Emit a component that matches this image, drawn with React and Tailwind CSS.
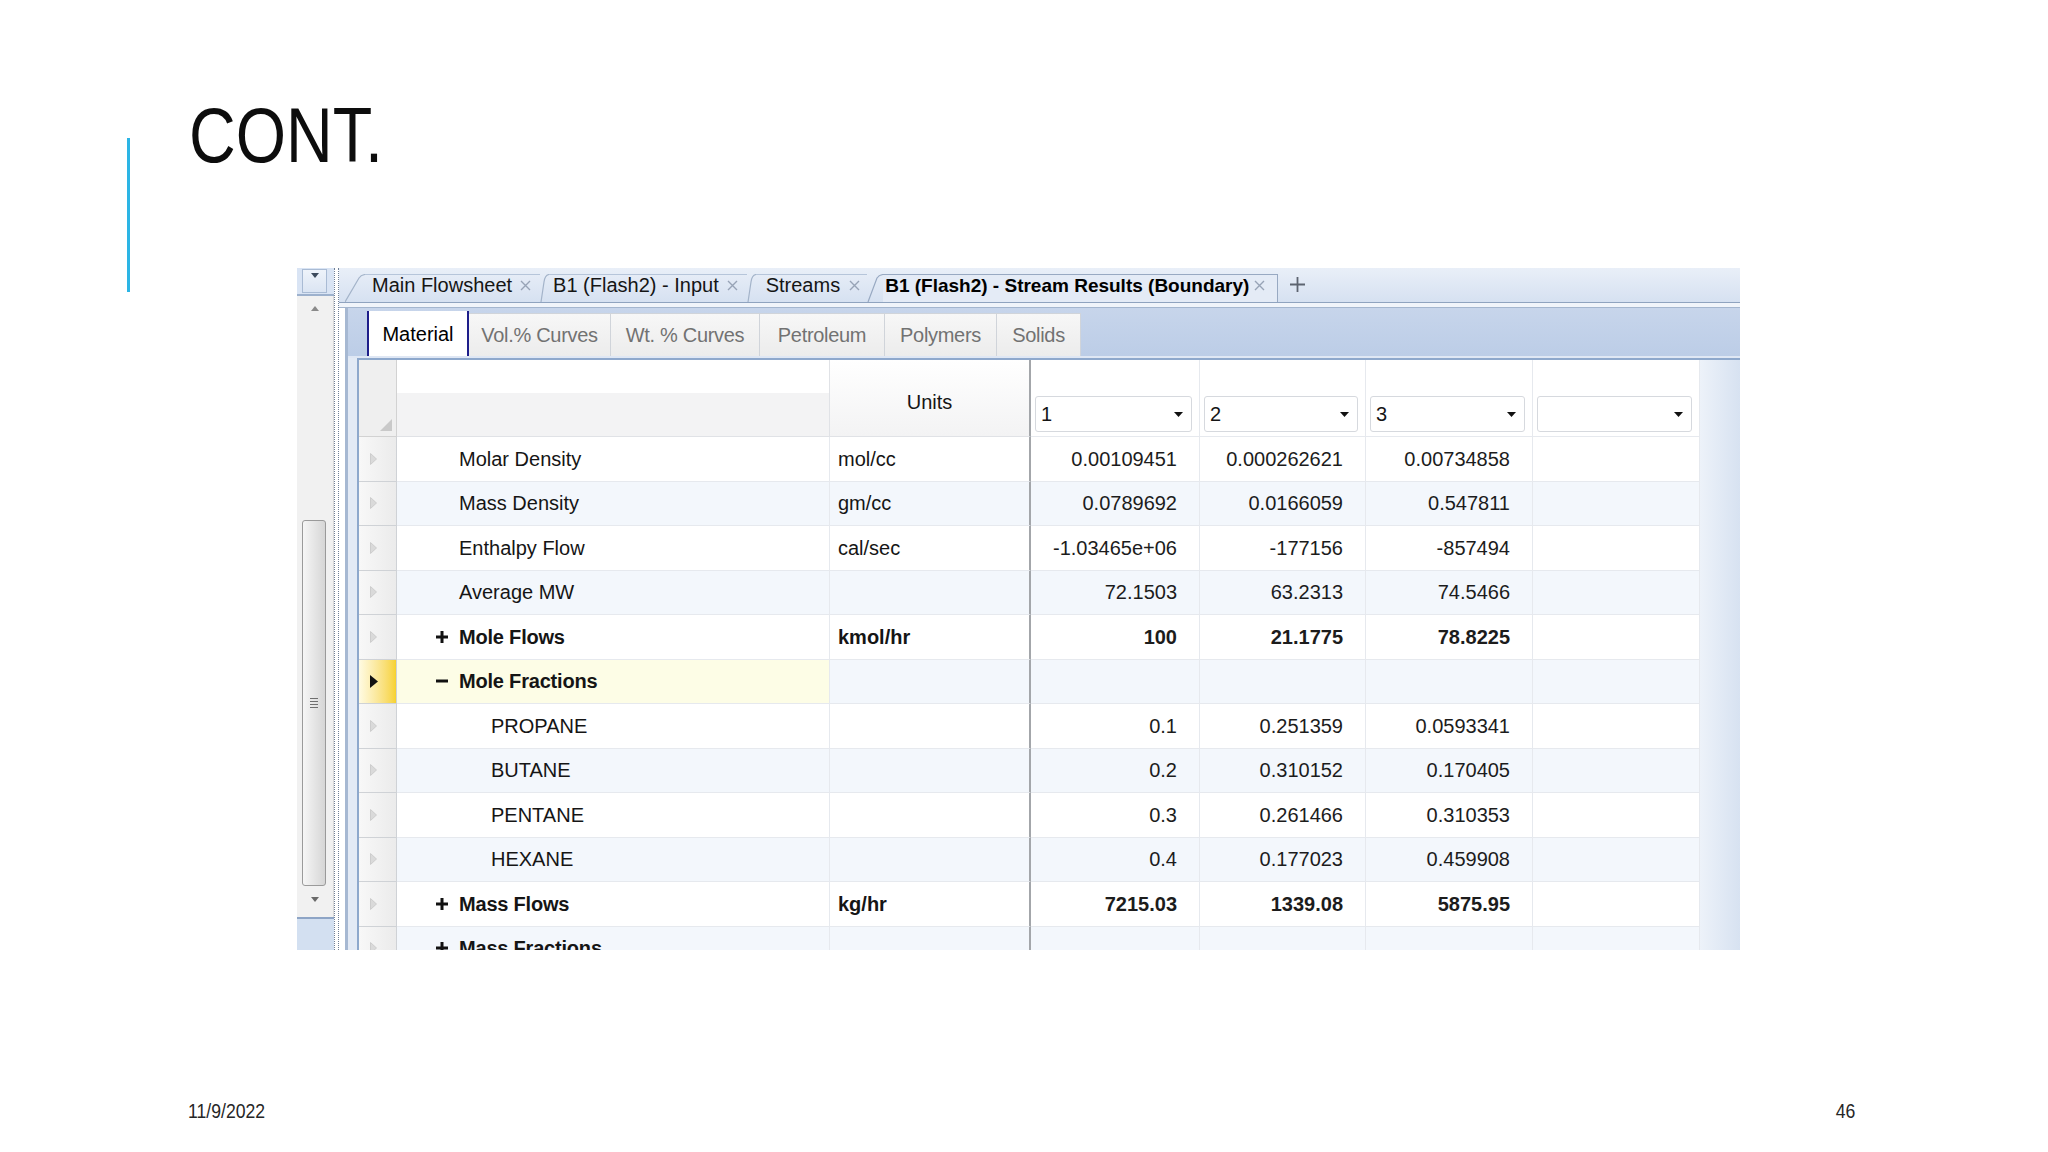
import React from "react";

const ROWS = [
    { name: "Molar Density", units: "mol/cc", v: ["0.00109451", "0.000262621", "0.00734858"] },
    { name: "Mass Density", units: "gm/cc", v: ["0.0789692", "0.0166059", "0.547811"] },
    { name: "Enthalpy Flow", units: "cal/sec", v: ["-1.03465e+06", "-177156", "-857494"] },
    { name: "Average MW", units: "", v: ["72.1503", "63.2313", "74.5466"] },
    { name: "Mole Flows", units: "kmol/hr", v: ["100", "21.1775", "78.8225"], bold: true, sign: "plus" },
    { name: "Mole Fractions", units: "", v: ["", "", ""], bold: true, sign: "minus", active: true },
    { name: "PROPANE", units: "", v: ["0.1", "0.251359", "0.0593341"], sub: true },
    { name: "BUTANE", units: "", v: ["0.2", "0.310152", "0.170405"], sub: true },
    { name: "PENTANE", units: "", v: ["0.3", "0.261466", "0.310353"], sub: true },
    { name: "HEXANE", units: "", v: ["0.4", "0.177023", "0.459908"], sub: true },
    { name: "Mass Flows", units: "kg/hr", v: ["7215.03", "1339.08", "5875.95"], bold: true, sign: "plus" },
    { name: "Mass Fractions", units: "", v: ["", "", ""], bold: true, sign: "plus" },
];

const VALUE_WIDTHS = ["w-[169px]", "w-[166px]", "w-[167px]", "w-[167px]"];

const SUB_TABS = [
    { label: "Vol.% Curves", w: "w-[142px]" },
    { label: "Wt. % Curves", w: "w-[149px]" },
    { label: "Petroleum", w: "w-[125px]" },
    { label: "Polymers", w: "w-[112px]" },
    { label: "Solids", w: "w-[84px]" },
];

const CloseX = () => (
    <svg width="11" height="11" viewBox="0 0 11 11" className="shrink-0">
        <path d="M1 1 L10 10 M10 1 L1 10" stroke="#97a3b6" strokeWidth="1.4" />
    </svg>
);

const Slant = ({ long }) =>
    long ? (
        <svg width="20" height="28" viewBox="0 0 20 28" className="shrink-0">
            <path d="M0 28 L14 4 Q16 1 20 0.5" stroke="#a3b3c9" strokeWidth="1.2" fill="none" />
        </svg>
    ) : (
        <svg width="9" height="28" viewBox="0 0 9 28" className="shrink-0">
            <path d="M1 28 L4 8 Q5 1 9 0.5" stroke="#a3b3c9" strokeWidth="1.2" fill="none" />
        </svg>
    );

const Sign = ({ type }) => (
    <svg width="12" height="12" viewBox="0 0 12 12" className="shrink-0">
        {type === "plus" && <path d="M6 0 V12 M0 6 H12" stroke="#111" strokeWidth="3" />}
        {type === "minus" && <path d="M0 6 H12" stroke="#111" strokeWidth="3" />}
    </svg>
);

const RowArrow = ({ active }) =>
    active ? (
        <svg width="8" height="13" viewBox="0 0 8 13">
            <path d="M0 0 L8 6.5 L0 13 Z" fill="#111" />
        </svg>
    ) : (
        <svg width="7" height="12" viewBox="0 0 7 12">
            <path d="M0.5 0.5 L6.5 6 L0.5 11.5 Z" fill="#dadada" stroke="#c6c6c6" strokeWidth="0.8" />
        </svg>
    );

const Dropdown = ({ label }) => (
    <div className="ml-[4px] mr-[7px] mt-[36px] h-[36px] flex items-center justify-between bg-white border border-[#d6d9de] rounded-[3px] pl-[5px] pr-[8px]">
        <span>{label}</span>
        <svg width="9" height="5" viewBox="0 0 9 5">
            <path d="M0 0 H9 L4.5 5 Z" fill="#111" />
        </svg>
    </div>
);

function DataRow({ row, index }) {
    const rowBg = index % 2 === 1 ? "bg-[#f3f7fc]" : "bg-white";
    const pad = row.sub ? "pl-[94px]" : row.sign ? "pl-[39px]" : "pl-[62px]";

    return (
        <div className={`flex h-[44.5px] shrink-0 ${rowBg} ${row.bold ? "font-bold" : ""}`}>
            <div
                className={`w-[38px] shrink-0 flex items-center pl-[11px] border-r border-b border-[#cfd2d6] ${
                    row.active
                        ? "bg-linear-to-r from-[#fffbe3] to-[#f7d22a]"
                        : "bg-linear-to-r from-[#f8f8f8] to-[#ebebeb]"
                }`}
            >
                <RowArrow active={row.active} />
            </div>

            <div
                className={`w-[433px] shrink-0 flex items-center gap-[11px] ${pad} border-r border-b border-[#e6e9ee] ${
                    row.active ? "bg-[#fdfde6]" : ""
                }`}
            >
                {row.sign && <Sign type={row.sign} />}
                <span className={row.bold ? "tracking-[-0.2px]" : ""}>{row.name}</span>
            </div>

            <div className="w-[201px] shrink-0 flex items-center pl-[8px] border-r-2 border-r-[#a3a6aa] border-b border-b-[#e6e9ee]">
                {row.units}
            </div>

            {VALUE_WIDTHS.map((w, i) => (
                <div
                    key={i}
                    className={`${w} shrink-0 flex items-center justify-end pr-[22px] border-r border-b border-[#e6e9ee] text-[#1c1c1c]`}
                >
                    {row.v[i] || ""}
                </div>
            ))}
        </div>
    );
}

function ScreenShot() {
    return (
        <div className="w-[1443px] h-[682px] overflow-hidden flex bg-white text-[20px] leading-none text-[#151515] font-['Liberation_Sans',Arial,sans-serif]">

            {/* left scroll column */}
            <div className="w-[37px] shrink-0 flex flex-col">
                <div className="h-[26px] bg-[#d9e4f4] pt-[1px]">
                    <div className="ml-[5px] w-[25px] h-[24px] border border-[#a9bbd4] bg-linear-to-b from-[#eef3fa] to-[#dbe5f3] flex justify-center pt-[3px]">
                        <svg width="8" height="5" viewBox="0 0 8 5">
                            <path d="M0 0 H8 L4 5 Z" fill="#3c4a5c" />
                        </svg>
                    </div>
                </div>
                <div className="h-[2px] bg-[#9db1cd]" />
                <div className="h-[621px] bg-[#f1f1f1] border-r border-[#d8d8d8] flex flex-col">
                    <div className="mt-[10px] flex justify-center">
                        <svg width="8" height="5" viewBox="0 0 8 5">
                            <path d="M0 5 H8 L4 0 Z" fill="#8a8a8a" />
                        </svg>
                    </div>
                    <div className="mt-[209px] ml-[5px] w-[24px] h-[366px] rounded-[3px] border border-[#9a9a9a] bg-linear-to-r from-[#f6f6f6] to-[#d6d6d6] flex flex-col items-center justify-center gap-[2px]">
                        <div className="w-[8px] h-[1px] bg-[#6f6f6f]" />
                        <div className="w-[8px] h-[1px] bg-[#6f6f6f]" />
                        <div className="w-[8px] h-[1px] bg-[#6f6f6f]" />
                        <div className="w-[8px] h-[1px] bg-[#6f6f6f]" />
                    </div>
                    <div className="mt-[11px] flex justify-center">
                        <svg width="8" height="5" viewBox="0 0 8 5">
                            <path d="M0 0 H8 L4 5 Z" fill="#6a6a6a" />
                        </svg>
                    </div>
                </div>
                <div className="h-[2px] bg-[#8ea5c6]" />
                <div className="flex-1 bg-[#d3e0f1]" />
            </div>

            {/* dotted splitter */}
            <div className="w-[5px] shrink-0 border-l border-r border-dotted border-[#6f7f96]" />

            {/* main panel */}
            <div className="flex-1 flex flex-col min-w-0">

                {/* document tabs */}
                <div className="h-[34px] shrink-0 flex items-end pl-[6px] bg-linear-to-b from-[#e9eff8] to-[#d6e1f1]">
                    <div className="flex items-end">
                        <Slant long />
                        <div className="h-[28px] flex items-center gap-[8px] pl-[7px] pr-[9px] pb-[7px] border-t border-[#b6c5da]">
                            <span>Main Flowsheet</span>
                            <CloseX />
                        </div>
                    </div>
                    <div className="flex items-end">
                        <Slant />
                        <div className="h-[28px] flex items-center gap-[8px] pl-[4px] pr-[9px] pb-[7px] border-t border-[#b6c5da]">
                            <span>B1 (Flash2) - Input</span>
                            <CloseX />
                        </div>
                    </div>
                    <div className="flex items-end">
                        <Slant />
                        <div className="h-[28px] flex items-center gap-[9px] pl-[10px] pr-[7px] pb-[7px] border-t border-[#b6c5da]">
                            <span>Streams</span>
                            <CloseX />
                        </div>
                    </div>
                    <div className="flex items-end">
                        <svg width="16" height="28" viewBox="0 0 16 28" className="shrink-0">
                            <path d="M1 28 L10 4 Q12 1 16 0.5" stroke="#98a9c2" strokeWidth="1.2" fill="none" />
                        </svg>
                        <div className="h-[28px] flex items-center gap-[5px] pl-[2px] pr-[12px] pb-[7px] border-t border-r border-[#98a9c2] bg-[#e4ebf6]">
                            <span className="font-bold text-[19px] text-black">B1 (Flash2) - Stream Results (Boundary)</span>
                            <CloseX />
                        </div>
                    </div>
                    <div className="h-[28px] flex items-center pl-[12px] pb-[7px]">
                        <svg width="15" height="15" viewBox="0 0 15 15">
                            <path d="M7.5 0 V15 M0 7.5 H15" stroke="#5d6470" strokeWidth="1.8" />
                        </svg>
                    </div>
                </div>

                <div className="h-[6px] shrink-0 border-t border-[#8fa3bf] border-b border-b-[#a4b6cf] bg-[#f0f4fa]" />

                {/* inner window */}
                <div className="flex-1 flex min-h-0">
                    <div className="w-[6px] shrink-0 bg-white" />
                    <div className="flex-1 flex flex-col border-l-[3px] border-[#a6b8d2] min-w-0">

                        {/* sub tabs */}
                        <div className="h-[48px] shrink-0 flex items-end pl-[19px] bg-linear-to-b from-[#c7d5eb] to-[#bccde7]">
                            <div className="w-[102px] h-[45px] flex items-center justify-center bg-white border-l-2 border-r-2 border-[#1e1e8a] text-black">
                                Material
                            </div>
                            {SUB_TABS.map((t) => (
                                <div
                                    key={t.label}
                                    className={`${t.w} h-[43px] flex items-center justify-center bg-linear-to-b from-[#f7f7f7] to-[#ececec] border-r border-t border-[#d0d4da] text-[#727272] tracking-[-0.3px]`}
                                >
                                    {t.label}
                                </div>
                            ))}
                        </div>

                        <div className="h-[2px] shrink-0 bg-[#dfe7f4]" />

                        {/* grid area */}
                        <div className="flex-1 flex min-h-0">
                            <div className="w-[9px] shrink-0 bg-[#e3eaf5]" />
                            <div className="flex-1 flex border-t-2 border-l-2 border-[#8ea8cc] min-w-0">
                                <div className="w-[1341px] shrink-0 flex flex-col">

                                    {/* header */}
                                    <div className="flex h-[77px] shrink-0 bg-white">
                                        <div className="w-[38px] shrink-0 flex items-end justify-end pb-[5px] pr-[4px] bg-[#efefef] border-r border-b border-[#d2d2d2]">
                                            <svg width="12" height="12" viewBox="0 0 12 12">
                                                <path d="M12 0 L12 12 L0 12 Z" fill="#c9c9c9" />
                                            </svg>
                                        </div>
                                        <div className="w-[433px] shrink-0 flex flex-col border-r border-b border-[#e0e2e6]">
                                            <div className="h-[33px] bg-white" />
                                            <div className="flex-1 bg-[#f3f3f4]" />
                                        </div>
                                        <div className="w-[201px] shrink-0 flex justify-center pt-[32px] bg-linear-to-b from-white to-[#f3f3f4] border-r-2 border-r-[#a3a6aa] border-b border-b-[#e0e2e6]">
                                            Units
                                        </div>
                                        {VALUE_WIDTHS.map((w, i) => (
                                            <div key={i} className={`${w} shrink-0 border-r border-b border-[#e6e9ee]`}>
                                                <Dropdown label={["1", "2", "3", ""][i]} />
                                            </div>
                                        ))}
                                    </div>

                                    {ROWS.map((row, i) => (
                                        <DataRow key={row.name} row={row} index={i} />
                                    ))}
                                </div>
                                <div className="flex-1 bg-linear-to-r from-[#edf2f9] to-[#d7e2f1]" />
                            </div>
                        </div>
                    </div>
                </div>
            </div>
        </div>
    );
}

export default function App() {
    return (
        <div className="w-[2048px] h-[1152px] bg-white flex flex-col overflow-hidden font-['Liberation_Sans',Arial,sans-serif]">
            <div className="flex">
                <div className="ml-[127px] mt-[138px] w-[3px] h-[154px] shrink-0 bg-[#2cb5e5]" />
                <div className="ml-[59px] flex flex-col items-start">
                    <h1 className="mt-[97px] text-[77px] leading-none text-[#0d0d0d] origin-left scale-x-[0.84]">CONT.</h1>
                    <div className="mt-[94px] ml-[108px]">
                        <ScreenShot />
                    </div>
                </div>
            </div>

            <footer className="mt-auto flex justify-between pl-[188px] pr-[193px] pb-[31px] text-[21px] leading-none text-[#262626]">
                <span className="inline-block origin-left scale-x-[0.84]">11/9/2022</span>
                <span className="inline-block origin-right scale-x-[0.84]">46</span>
            </footer>
        </div>
    );
}
